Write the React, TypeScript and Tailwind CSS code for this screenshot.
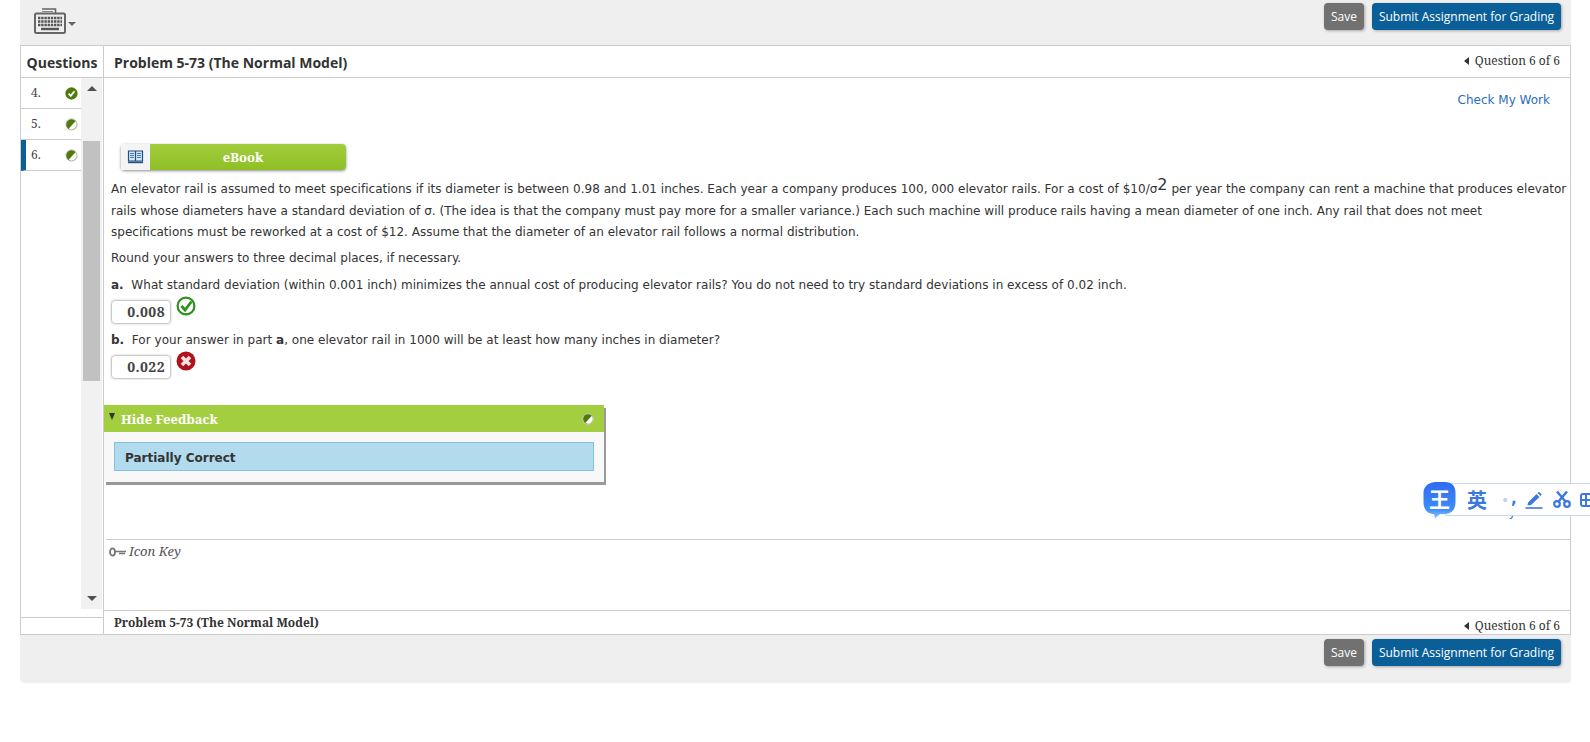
const serif = "font-['Noto_Serif','DejaVu_Serif',serif]";

function PartialIcon({ size = 13 }: { size?: number }) {
  return (
    <svg width={size} height={size} viewBox="0 0 14 14">
      <circle cx="7" cy="7" r="6.6" fill="#c9c9c9" />
      <circle cx="7" cy="7" r="5.6" fill="#4f7a0c" />
      <path d="M11.2 3.6 A5.4 5.4 0 0 1 4 11.5 Z" fill="#fff" />
    </svg>
  );
}

function CheckDot() {
  return (
    <svg width="13" height="13" viewBox="0 0 14 14">
      <circle cx="7" cy="7" r="6.6" fill="#4f7a0c" />
      <path d="M4 7.2 L6.2 9.6 L10.2 4.6" fill="none" stroke="#fff" strokeWidth="2" />
    </svg>
  );
}

function KeyboardIcon() {
  return (
    <svg width="32" height="26" viewBox="0 0 32 26" fill="none">
      <path d="M8 1 H21.5 V5.5" stroke="#666" strokeWidth="1.6" />
      <path d="M8 3.5 H19" stroke="#888" strokeWidth="1" />
      <rect x="1" y="5.5" width="30" height="19.5" rx="1.5" stroke="#666" strokeWidth="2" />
      <path
        d="M4 10 H28 M4 13.5 H28 M4 17 H28"
        stroke="#555"
        strokeWidth="2.4"
        strokeDasharray="2.4 0.8"
      />
      <path d="M7 21 H25" stroke="#555" strokeWidth="2.4" />
    </svg>
  );
}

function ActionButtons() {
  return (
    <div className="flex items-center justify-end gap-2 pr-[10px] font-['Open_Sans',sans-serif] text-xs text-white">
      <button className="h-[27px] w-[40px] rounded bg-[#717171] shadow-[1px_1px_3px_rgba(0,0,0,0.3)]">
        Save
      </button>
      <button className="h-[27px] w-[189px] rounded bg-[#0b5f99] shadow-[1px_1px_3px_rgba(0,0,0,0.3)]">
        Submit Assignment for Grading
      </button>
    </div>
  );
}

function QuestionCount({ className }: { className: string }) {
  return (
    <span className={`flex items-center gap-[6px] text-xs font-normal text-[#333] ${serif} ${className}`}>
      <span className="h-0 w-0 border-y-[4px] border-r-[5px] border-y-transparent border-r-[#333]" />
      Question 6 of 6
    </span>
  );
}

function QuestionRow({ num, active, done }: { num: string; active?: boolean; done?: boolean }) {
  return (
    <div
      className={`flex h-[31px] items-center justify-between border-b border-[#ccc] pr-[3px] text-xs text-[#444] ${serif} ${
        active ? "border-l-[5px] border-l-[#0b5f99] pl-[5px]" : "pl-[10px]"
      }`}
    >
      <span>{num}</span>
      {done ? <CheckDot /> : <PartialIcon />}
    </div>
  );
}

function Answer({ value }: { value: string }) {
  return (
    <div
      className={`mt-[3px] flex h-[24px] w-[60px] items-center justify-end rounded-sm border border-[#ccc] pr-[5px] text-[14px] font-bold tracking-[0.4px] text-[#444] shadow-[0_0_2px_rgba(0,0,0,0.25)] ${serif}`}
    >
      {value}
    </div>
  );
}

export default function App() {
  return (
    <div className="relative h-[742px] w-[1590px] overflow-hidden bg-white font-['DejaVu_Sans',sans-serif]">
      <div className="ml-[20px] w-[1551px] rounded-b bg-[#efefef]">
        {/* top bar */}
        <div className="flex h-[45px] items-start justify-between pt-[3px]">
          <div className="ml-[14px] mt-[5px] flex items-center gap-[2px]">
            <KeyboardIcon />
            <span className="mt-[5px] h-0 w-0 border-x-[4px] border-t-[4px] border-x-transparent border-t-[#666]" />
          </div>
          <ActionButtons />
        </div>

        <div className="flex h-[590px] flex-col border border-[#ccc] bg-white">
          {/* header */}
          <div className="flex h-[32px] shrink-0 border-b border-[#ccc]">
            <div className="flex w-[83px] shrink-0 items-center justify-center border-r border-[#ccc] pt-[2px] font-['Open_Sans',sans-serif] text-[14px] font-bold text-[#333]">
              Questions
            </div>
            <div className="flex flex-1 items-center justify-between px-[10px] font-['Open_Sans',sans-serif] text-[14px] font-bold text-[#333]">
              <span className="pt-[2px]">Problem 5-73 (The Normal Model)</span>
              <QuestionCount className="mb-[2px]" />
            </div>
          </div>

          {/* body */}
          <div className="flex min-h-0 flex-1">
            <div className="flex w-[83px] shrink-0 flex-col border-r border-[#ccc]">
              <div className="flex h-[540px] shrink-0 border-b border-[#ccc]">
                <div className="w-[60px]">
                  <QuestionRow num="4." done />
                  <QuestionRow num="5." />
                  <QuestionRow num="6." active />
                </div>
                <div className="flex h-[531px] w-[21px] flex-col bg-[#f1f1f1]">
                  <div className="flex h-[21px] items-center justify-center">
                    <span className="h-0 w-0 border-x-[5px] border-b-[5px] border-x-transparent border-b-[#505050]" />
                  </div>
                  <div className="ml-[2px] mt-[42px] h-[240px] w-[17px] bg-[#c1c1c1]" />
                  <div className="flex-1" />
                  <div className="flex h-[21px] items-center justify-center">
                    <span className="h-0 w-0 border-x-[5px] border-t-[5px] border-x-transparent border-t-[#505050]" />
                  </div>
                </div>
              </div>
            </div>

            <div className="flex min-w-0 flex-1 flex-col">
              <div className="h-[533px] shrink-0 border-b border-[#ccc]">
                <div className="flex justify-end pr-[20px] pt-[13px] text-xs leading-[18px] text-[#2a6ebb]">
                  Check My Work
                </div>

                {/* ebook */}
                <div className="ml-[17px] mt-[35px] flex h-[26px] w-[225px] rounded-sm shadow-[0_1px_3px_rgba(0,0,0,0.45)]">
                  <div className="flex w-[29px] items-center justify-center bg-[#f4f4f4]">
                    <svg width="17" height="14" viewBox="0 0 17 14" fill="none">
                      <path d="M1.5 1 H8.5 V11 H1.5 Z M8.5 1 H15.5 V11 H8.5 Z" fill="#d5e6f6" stroke="#1f4e86" strokeWidth="1.2" />
                      <path d="M3 3.5 H7 M3 5.5 H7 M3 7.5 H7 M10 3.5 H14 M10 5.5 H14 M10 7.5 H14" stroke="#4a76a8" />
                      <path d="M1 12.4 H16" stroke="#1f4e86" strokeWidth="1.6" />
                    </svg>
                  </div>
                  <div
                    className={`flex flex-1 items-center justify-center rounded-r-sm bg-[linear-gradient(#a2cd3c,#8fbf26)] pr-[10px] pt-[1px] text-[13px] font-bold text-white ${serif}`}
                  >
                    eBook
                  </div>
                </div>

                {/* question text */}
                <div className="mt-[7px] whitespace-nowrap pl-[7px] text-xs leading-[21.5px] tracking-[0.02px] text-[#333]">
                  <p>
                    An elevator rail is assumed to meet specifications if its diameter is between 0.98 and 1.01 inches.
                    Each year a company produces 100, 000 elevator rails. For a cost of $10/σ
                    <span className="align-[3px] text-base leading-none">2</span> per year the company can rent a
                    machine that produces elevator
                    <br />
                    rails whose diameters have a standard deviation of σ. (The idea is that the company must pay more
                    for a smaller variance.) Each such machine will produce rails having a mean diameter of one inch.
                    Any rail that does not meet
                    <br />
                    specifications must be reworked at a cost of $12. Assume that the diameter of an elevator rail
                    follows a normal distribution.
                  </p>
                  <p className="mt-[4px]">Round your answers to three decimal places, if necessary.</p>
                  <p className="mt-[6px]">
                    <b>a.</b>&nbsp; What standard deviation (within 0.001 inch) minimizes the annual cost of producing
                    elevator rails? You do not need to try standard deviations in excess of 0.02 inch.
                  </p>
                  <div className="flex items-start gap-[5px]">
                    <Answer value="0.008" />
                    <svg width="20" height="20" viewBox="0 0 20 20" fill="none" className="-mt-[1px]">
                      <circle cx="10" cy="10" r="8.4" stroke="#2f8f1f" strokeWidth="2.2" />
                      <path d="M5.5 10 L9 14 L15.5 5.5" stroke="#2f8f1f" strokeWidth="2.8" />
                    </svg>
                  </div>
                  <p className="mt-[6px]">
                    <b>b.</b>&nbsp; For your answer in part <b>a</b>, one elevator rail in 1000 will be at least how
                    many inches in diameter?
                  </p>
                  <div className="mt-[1px] flex items-start gap-[5px]">
                    <Answer value="0.022" />
                    <svg width="20" height="20" viewBox="0 0 20 20" fill="none" className="-mt-[1px]">
                      <circle cx="10" cy="10" r="9.5" fill="#b0121b" />
                      <path d="M6 6 L14 14 M14 6 L6 14" stroke="#f3e4e4" strokeWidth="3.6" />
                    </svg>
                  </div>
                </div>

                {/* feedback */}
                <div className="mt-[26px] w-[500px] bg-[#f8f8f8] shadow-[2px_3px_0_#999]">
                  <div className="relative flex h-[27px] items-center justify-between bg-[#a3ce40] pl-[17px] pr-[10px]">
                    <span className={`pt-[3px] text-[13px] font-bold text-white ${serif}`}>Hide Feedback</span>
                    <span className="absolute left-[5px] top-[8px] h-0 w-0 border-x-[3px] border-t-[7px] border-x-transparent border-t-[#333]" />
                    <PartialIcon size={12} />
                  </div>
                  <div className="px-[10px] pb-[11px] pt-[10px]">
                    <div className="flex h-[29px] items-center border border-[#86c0de] bg-[#b2dbee] pl-[10px] pt-[3px] text-xs font-bold text-[#333]">
                      Partially Correct
                    </div>
                  </div>
                </div>

                {/* second check link, mostly hidden by the floating toolbar */}
                <div className="flex h-[57px] justify-end pr-[20px] pt-[21px] text-xs leading-[18px] text-[#2a6ebb]">
                  Check My Work
                </div>

                {/* icon key */}
                <div className="ml-[2px] flex h-[24px] items-center gap-[2px] border-t border-[#ccc] pl-[3px]">
                  <svg width="18" height="10" viewBox="0 0 18 10" fill="none">
                    <ellipse cx="3.5" cy="5" rx="2.5" ry="3.6" stroke="#777" strokeWidth="1.8" />
                    <path d="M6 4.5 H17 M10 6.5 H16" stroke="#777" strokeWidth="1.3" />
                  </svg>
                  <span className={`text-[13px] italic text-[#555] ${serif}`}>Icon Key</span>
                </div>
              </div>

              {/* footer */}
              <div className="flex flex-1 items-center justify-between px-[10px]">
                <span className={`text-xs font-bold text-[#333] ${serif}`}>Problem 5-73 (The Normal Model)</span>
                <QuestionCount className="mt-[6px]" />
              </div>
            </div>
          </div>
        </div>

        <div className="h-[48px] pt-[4px]">
          <ActionButtons />
        </div>
      </div>

      {/* browser extension toolbar floating over the page */}
      <div className="absolute left-[1445px] top-[483px] flex h-[33px] w-[160px] items-center border border-[#c5d9f5] bg-white pl-[21px] text-[#3b78e0]">
        <span className="font-['Noto_Sans_CJK_SC',sans-serif] text-[20px] font-bold leading-none">英</span>
        <span className="ml-[14px] w-[10px] text-[14px] leading-none text-[#bcd4f7]">•</span>
        <span className="w-[12px] text-[15px] font-bold leading-none">,</span>
        <svg width="18" height="18" viewBox="0 0 18 18" className="ml-[2px]">
          <path d="M3 11.5 L11.5 3 L14.5 6 L6 14 L2.5 14.5 Z M12.5 2 L14 0.8 L16.8 3.6 L15.5 5 Z" fill="#3b78e0" />
          <path d="M0.5 17 H17.5" stroke="#3b78e0" strokeWidth="1.6" />
        </svg>
        <svg width="18" height="17" viewBox="0 0 18 17" fill="none" className="ml-[10px]">
          <circle cx="4" cy="13" r="2.8" stroke="#3b78e0" strokeWidth="2.2" />
          <circle cx="14" cy="13" r="2.8" stroke="#3b78e0" strokeWidth="2.2" />
          <path d="M5.5 10.5 L14 0.5 M12.5 10.5 L4 0.5" stroke="#3b78e0" strokeWidth="2.4" />
        </svg>
        <svg width="16" height="14" viewBox="0 0 16 14" fill="none" className="ml-[9px] shrink-0">
          <rect x="1" y="1" width="14" height="12" rx="2" stroke="#3b78e0" strokeWidth="2" />
          <path d="M1 7 H15 M6 1 V13" stroke="#3b78e0" strokeWidth="2" />
        </svg>
      </div>
      <div className="absolute left-[1423px] top-[482px]">
        <svg width="33" height="37" viewBox="0 0 33 37" className="absolute left-0 top-0">
          <defs>
            <linearGradient id="logoFill" x1="0" y1="0" x2="0" y2="1">
              <stop offset="0" stopColor="#2f6bf0" />
              <stop offset="0.75" stopColor="#3f8cf7" />
              <stop offset="1" stopColor="#8ecbfb" />
            </linearGradient>
          </defs>
          <path
            d="M13 0 H22 C29 0 32.5 4 32.5 11 V20 C32.5 28 28 32 21 32 H17 L12 36.5 L11 32 C4 32 0.5 27 0.5 20 V11 C0.5 5 5 0 13 0 Z"
            fill="url(#logoFill)"
          />
        </svg>
        <div className="relative flex h-[33px] w-[33px] items-center justify-center font-['Noto_Sans_CJK_SC',sans-serif] text-[21px] font-bold text-white">
          王
        </div>
      </div>
    </div>
  );
}
